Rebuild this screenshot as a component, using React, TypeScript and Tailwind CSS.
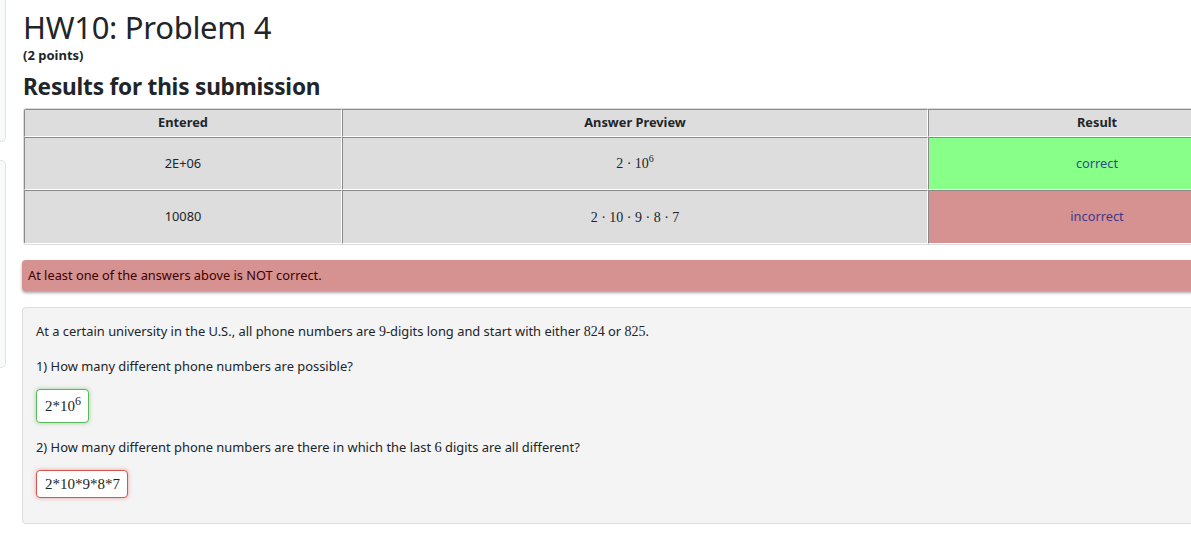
import React from "react";

const sans = { fontFamily: '"Noto Sans", "Open Sans", sans-serif' };
const serif = { fontFamily: '"Liberation Serif", serif' };

const cell =
  "bg-[#dddddd] border border-t-[#8a8a8a] border-l-[#8a8a8a] border-r-white border-b-white";

export default function App() {
  return (
    <div
      className="w-[1191px] h-[537px] overflow-hidden bg-white flex text-[#212529]"
      style={sans}
    >
      <aside className="w-[6px] shrink-0 flex flex-col gap-[18px]">
        <div className="h-[142px] border-r border-b border-[#e1e4e8] bg-[#f8f9fa] rounded-br-[5px]" />
        <div className="h-[208px] border-r border-y border-[#e1e4e8] bg-[#f8f9fa] rounded-r-[5px]" />
      </aside>
      <main className="ml-[16px] w-[1245px] shrink-0 pt-[8px]">
        <div className="pl-[1px]">
          <h1 className="text-[31px] leading-[38px] tracking-[-0.3px]">HW10: Problem 4</h1>
          <div className="text-[13px] font-bold leading-[16px] mt-[1px]">(2 points)</div>
          <h2 className="text-[22.6px] font-bold leading-[28px] mt-[10px] tracking-[-0.2px]">
            Results for this submission
          </h2>
        </div>
        <div className="mt-[7px] ml-[1px] border border-[#dcdcdc] rounded-[3px] overflow-hidden">
          <table className="w-full border-separate border-spacing-0 text-[12.8px] text-center">
            <thead>
              <tr className="h-[28px]">
                <th className={`w-[318px] ${cell} font-bold`}>Entered</th>
                <th className={`w-[586px] ${cell} font-bold`}>Answer Preview</th>
                <th className={`${cell} font-bold`}>Result</th>
              </tr>
            </thead>
            <tbody>
              <tr className="h-[53px]">
                <td className={cell}>2E+06</td>
                <td className={`${cell} text-[14px]`} style={serif}>
                  2 · 10<sup className="text-[10px] relative -top-[6px]">6</sup>
                </td>
                <td className="bg-[#88ff88] border border-t-[#8a8a8a] border-l-[#8a8a8a] border-r-white border-b-white text-[#2d4f8a]">
                  correct
                </td>
              </tr>
              <tr className="h-[54px]">
                <td className={cell}>10080</td>
                <td className={`${cell} text-[14px]`} style={serif}>
                  2 · 10 · 9 · 8 · 7
                </td>
                <td className="bg-[#d69191] border border-t-[#8a8a8a] border-l-[#8a8a8a] border-r-white border-b-white text-[#3c3a8a]">
                  incorrect
                </td>
              </tr>
            </tbody>
          </table>
        </div>
        <div className="mt-[15px] h-[31px] bg-[#d69191] rounded-[4px] shadow-[0_2px_3px_rgba(0,0,0,0.35)] px-[6px] flex items-center text-[12.8px] text-[#400000]">
          At least one of the answers above is NOT correct.
        </div>
        <div className="mt-[16px] h-[217px] bg-[#f4f4f4] border border-[#dcdcdc] rounded-[4px] pl-[13px] pt-[13px] text-[12.9px]">
          <p className="leading-[20px]">
            At a certain university in the U.S., all phone numbers are{" "}
            <span style={serif} className="text-[14px]">9</span>-digits long and start with either{" "}
            <span style={serif} className="text-[14px]">824</span> or{" "}
            <span style={serif} className="text-[14px]">825</span>.
          </p>
          <p className="leading-[20px] mt-[14px]">1) How many different phone numbers are possible?</p>
          <div
            className="mt-[13px] inline-flex items-center h-[34px] pl-[8px] pr-[7px] bg-white border border-[#5cb85c] rounded-[4px] shadow-[0_0_4px_rgba(92,184,92,0.6)] text-[15px]"
            style={serif}
          >
            <span>
              2*10<sup className="text-[12px] relative -top-[6px]">6</sup>
            </span>
          </div>
          <p className="leading-[20px] mt-[14px]">
            2) How many different phone numbers are there in which the last{" "}
            <span style={serif} className="text-[14.5px]">6</span> digits are all different?
          </p>
          <div>
            <div
              className="mt-[13px] inline-flex items-center h-[28px] pl-[8px] pr-[7px] bg-white border border-[#d9534f] rounded-[4px] shadow-[0_0_4px_rgba(217,83,79,0.5)] text-[15px]"
              style={serif}
            >
              2*10*9*8*7
            </div>
          </div>
        </div>
      </main>
    </div>
  );
}
